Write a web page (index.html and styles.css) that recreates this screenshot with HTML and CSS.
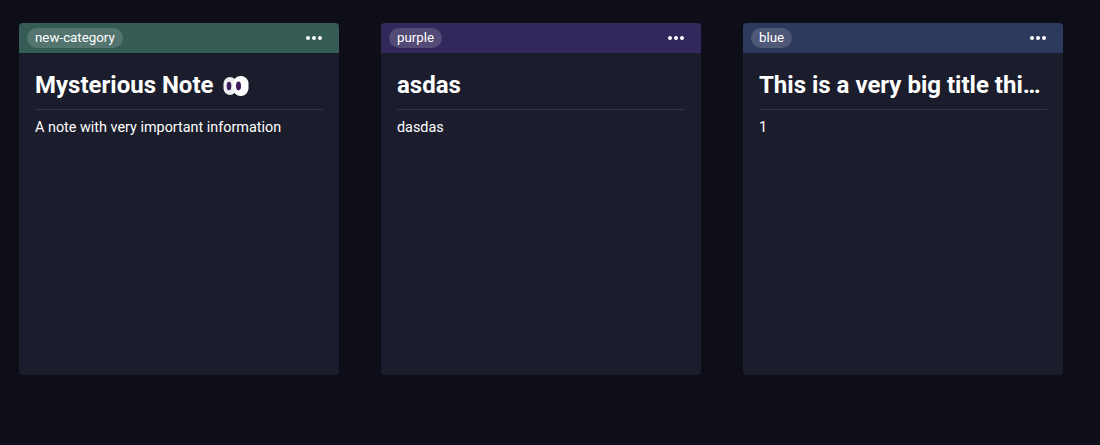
FILE: index.html
```html
<!DOCTYPE html>
<html lang="en">
<head>
    <meta charset="UTF-8">
    <title>Notes</title>
    <link rel="stylesheet" href="styles.css">
</head>
<body>

    <main class="notes">
        <article class="note">
            <header class="note-header note-header-green">
                <span class="tag">new-category</span>
                <button class="menu-button" aria-label="Options"><i></i><i></i><i></i></button>
            </header>
            <div class="note-body">
                <h2 class="note-title">Mysterious Note
                    <svg class="eyes" width="26" height="22" viewBox="0 0 26 22">
                        <rect x="0.5" y="2" width="13" height="18" rx="6.5" fill="#eeedf2"/>
                        <rect x="10" y="1" width="15.5" height="20" rx="7.5" fill="#fff"/>
                        <ellipse cx="6" cy="11" rx="2.3" ry="4.2" fill="#3f1d5c"/>
                        <ellipse cx="15.5" cy="11" rx="2.5" ry="4.4" fill="#3f1d5c"/>
                    </svg>
                </h2>
                <p class="note-text">A note with very important information</p>
            </div>
        </article>

        <article class="note">
            <header class="note-header note-header-purple">
                <span class="tag">purple</span>
                <button class="menu-button" aria-label="Options"><i></i><i></i><i></i></button>
            </header>
            <div class="note-body">
                <h2 class="note-title">asdas</h2>
                <p class="note-text">dasdas</p>
            </div>
        </article>

        <article class="note">
            <header class="note-header note-header-blue">
                <span class="tag">blue</span>
                <button class="menu-button" aria-label="Options"><i></i><i></i><i></i></button>
            </header>
            <div class="note-body">
                <h2 class="note-title">This is a very big title this is a very big title</h2>
                <p class="note-text">1</p>
            </div>
        </article>
    </main>

</body>
</html>
```

FILE: styles.css
```css
body {
    margin: 0;
    height: 445px;
    overflow: hidden;
    background: #0d0e17;
    color: #fff;
    font-family: 'Roboto', sans-serif;
}

.notes {
    display: flex;
    gap: 42px;
    padding: 23px 19px;
}

.note {
    width: 320px;
    height: 352px;
    border-radius: 4px;
    overflow: hidden;
    background: #1b1d2c;
}

.note-header {
    height: 30px;
    padding: 0 17px 0 8px;
    display: flex;
    align-items: center;
    justify-content: space-between;
}

.note-header-green {
    background: #345b54;
}

.note-header-purple {
    background: #33285b;
}

.note-header-blue {
    background: #2e395e;
}

.tag {
    height: 20px;
    padding: 0 8px;
    border-radius: 10px;
    background: rgba(255, 255, 255, 0.16);
    font-size: 13.33px;
    line-height: 20px;
}

.menu-button {
    display: flex;
    gap: 2px;
    padding: 0;
    border: none;
    background: none;
}

.menu-button i {
    width: 4px;
    height: 4px;
    border-radius: 50%;
    background: #fff;
}

.note-body {
    padding: 16px;
}

.note-title {
    margin: 0;
    padding-bottom: 8px;
    height: 32px;
    line-height: 32px;
    border-bottom: 1px solid #33354a;
    font-size: 24px;
    font-weight: 700;
    white-space: nowrap;
    overflow: hidden;
    text-overflow: ellipsis;
}

.eyes {
    vertical-align: -4px;
    margin-left: 4px;
}

.note-text {
    margin: 9px 0 0;
    font-size: 14.4px;
    line-height: 18px;
    color: #fff;
}
```
